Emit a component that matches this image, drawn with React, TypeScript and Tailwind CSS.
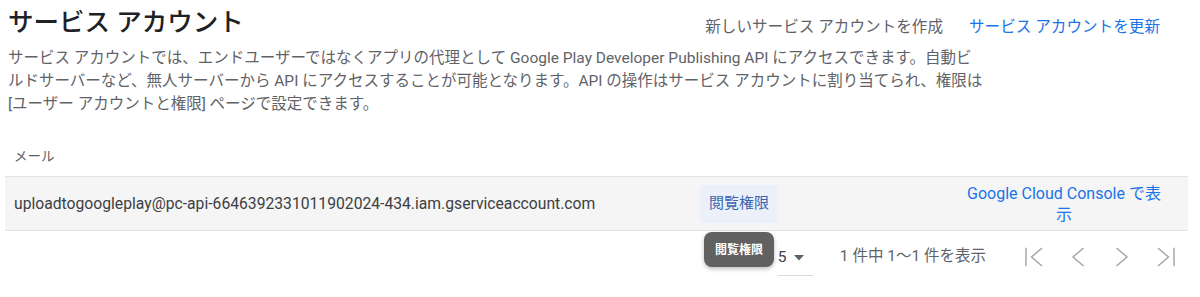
import React from "react";

const FirstIcon = () => (
  <svg width="24" height="24" viewBox="0 0 24 24" fill="none" stroke="#a0a4a8" strokeWidth="1.4" strokeLinecap="square">
    <path d="M4 3.5v17" />
    <path d="M19.5 3.5L9.5 12l10 8.5" />
  </svg>
);
const PrevIcon = () => (
  <svg width="24" height="24" viewBox="0 0 24 24" fill="none" stroke="#a0a4a8" strokeWidth="1.4" strokeLinecap="square">
    <path d="M17 3.5L7 12l10 8.5" />
  </svg>
);
const NextIcon = () => (
  <svg width="24" height="24" viewBox="0 0 24 24" fill="none" stroke="#a0a4a8" strokeWidth="1.4" strokeLinecap="square">
    <path d="M7 3.5L17 12 7 20.5" />
  </svg>
);
const LastIcon = () => (
  <svg width="24" height="24" viewBox="0 0 24 24" fill="none" stroke="#a0a4a8" strokeWidth="1.4" strokeLinecap="square">
    <path d="M4.5 3.5l10 8.5-10 8.5" />
    <path d="M20 3.5v17" />
  </svg>
);

export default function App() {
  return (
    <div className="relative w-[1200px] h-[297px] overflow-hidden bg-white font-['Roboto','Noto_Sans_CJK_JP',sans-serif]">
      {/* Header */}
      <div className="flex items-start justify-between pl-[8px] pr-[40px] h-[47px]">
        <h1 className="text-[25.5px] leading-[32px] pt-[6px] font-medium text-[#202124]">サービス アカウント</h1>
        <div className="flex gap-[26px] pt-[16px] text-[15.6px] leading-[22px]">
          <span className="text-[#5f6368]">新しいサービス アカウントを作成</span>
          <span className="text-[#1a73e8]">サービス アカウントを更新</span>
        </div>
      </div>

      {/* Description */}
      <div className="pl-[8px] text-[15.5px] leading-[23px] text-[#5f6368]">
        <div className="whitespace-nowrap">
          サービス アカウントでは、エンドユーザーではなくアプリの代理として Google Play Developer Publishing API にアクセスできます。自動ビ
        </div>
        <div className="whitespace-nowrap">
          ルドサーバーなど、無人サーバーから API にアクセスすることが可能となります。API の操作はサービス アカウントに割り当てられ、権限は
        </div>
        <div className="whitespace-nowrap">[ユーザー アカウントと権限] ページで設定できます。</div>
      </div>

      {/* Table */}
      <div className="mt-[21px] ml-[5px] w-[1183px]">
        <div className="h-[39px] flex items-center pl-[9px] text-[13.5px] text-[#5f6368]">メール</div>
        <div className="grid grid-cols-[690px_245px_1fr] h-[55px] border-y border-[#e3e3e3] bg-[#f5f5f5] items-center">
          <div className="pl-[9px] text-[15.7px] text-[#3c4043] whitespace-nowrap">
            uploadtogoogleplay@pc-api-6646392331011902024-434.iam.gserviceaccount.com
          </div>
          <div className="pl-[5px]">
            <span className="inline-flex items-center h-[38px] px-[9px] rounded-[4px] bg-[#ecf1f9] text-[15px] text-[#3a63b0]">
              閲覧権限
            </span>
          </div>
          <div className="text-center text-[16px] leading-[21px] text-[#1a73e8]">
            Google Cloud Console で表
            <br />
            示
          </div>
        </div>

        {/* Pagination */}
        <div className="flex items-center justify-end h-[52px] text-[15.5px] text-[#5f6368]">
          <div className="flex items-center gap-[7px] w-[35px] h-[36px] mt-[2px] border-b border-[#dadce0] text-[#3c4043]">
            <span>5</span>
            <svg width="10" height="6" viewBox="0 0 10 6">
              <path d="M0 0h10L5 5.5z" fill="#5f6368" />
            </svg>
          </div>
          <div className="ml-[27px] mr-[26px]">1 件中 1〜1 件を表示</div>
          <div className="flex">
            <div className="w-[44px] flex justify-center"><FirstIcon /></div>
            <div className="w-[44px] flex justify-center"><PrevIcon /></div>
            <div className="w-[44px] flex justify-center"><NextIcon /></div>
            <div className="w-[44px] flex justify-center"><LastIcon /></div>
          </div>
        </div>
      </div>

      {/* Tooltip */}
      <div className="absolute left-[704px] top-[232px] w-[70px] h-[35px] rounded-[8px] bg-[#616161] shadow-[0_2px_4px_rgba(0,0,0,0.25)] flex items-center justify-center text-[12px] font-bold text-white">
        閲覧権限
      </div>
    </div>
  );
}
